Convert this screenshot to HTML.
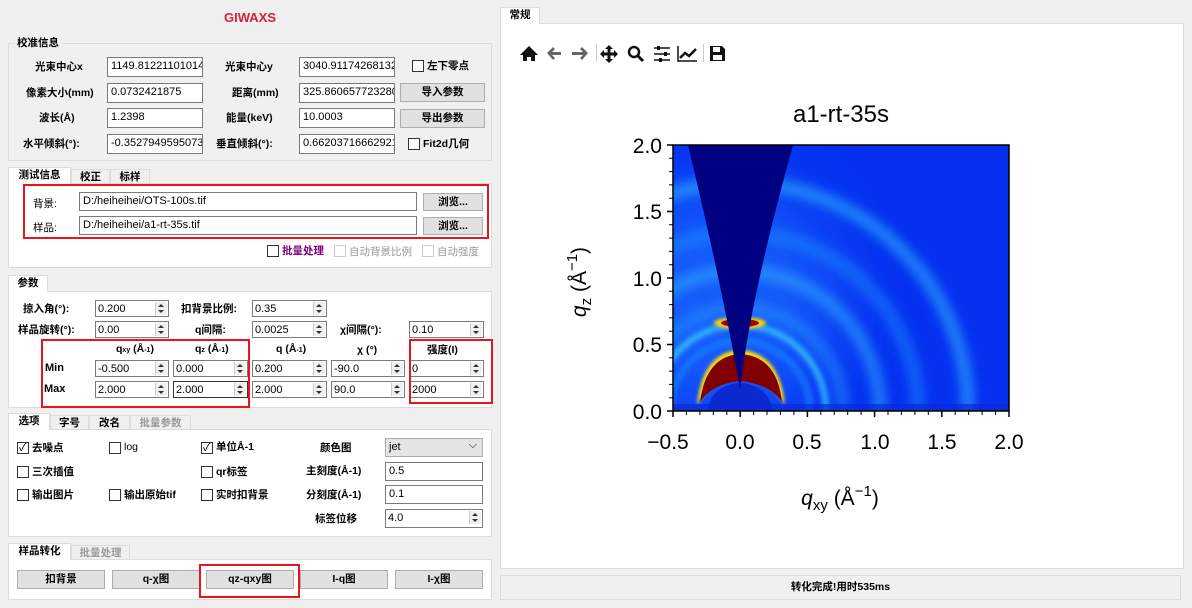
<!DOCTYPE html>
<html><head><meta charset="utf-8">
<style>
*{box-sizing:border-box;margin:0;padding:0}
body{width:1192px;height:608px;background:#f0f0f0;font-family:"Liberation Sans","Noto Sans CJK SC",sans-serif;font-size:11px;color:#000;position:relative;overflow:hidden}
.a{position:absolute}
.lb{position:absolute;font-weight:bold;font-size:10.5px;white-space:nowrap;line-height:13px}
.in{position:absolute;background:#fff;border:1px solid #7a7a7a;font-size:11px;padding:2px 0 0 3px;white-space:nowrap;overflow:hidden;height:20px}
.sp{position:absolute;background:#fff;border:1px solid #7a7a7a;height:17px;font-size:11px;padding:1px 0 0 2px;white-space:nowrap;line-height:14px}
.sp:after{content:"";position:absolute;right:1px;top:1px;width:11px;height:13px;border-left:1px solid #ccc;background:#f0f0f0}
.sp i{position:absolute;right:4px;top:3px;width:0;height:0;border:3px solid transparent;border-bottom:3px solid #333;border-top:0;z-index:2}
.sp b{position:absolute;right:4px;top:9px;width:0;height:0;border:3px solid transparent;border-top:3px solid #333;border-bottom:0;z-index:2}
.btn{position:absolute;background:#e1e1e1;border:1px solid #adadad;font-weight:bold;font-size:10.5px;text-align:center;line-height:17px}
.grp{position:absolute;border:1px solid #dcdcdc;background:#f0f0f0}
.panel{position:absolute;border:1px solid #dcdcdc;background:#fff}
.tab{position:absolute;border:1px solid #dcdcdc;border-bottom:none;background:#f0f0f0;font-weight:bold;font-size:10.5px;text-align:center;line-height:15px}
.tab.on{background:#fff;height:17px}
.cb{position:absolute;width:12px;height:12px;border:1px solid #333;background:#fff}
.cb.dis{border-color:#ccc}
.red{position:absolute;border:2px solid #e8141e;z-index:5}
small{font-size:7px}
</style></head><body>
<div class="a" style="left:0;top:10px;width:500px;text-align:center;color:#d81e3c;font-weight:bold;font-size:13px">GIWAXS</div>

<div class="grp" style="left:8px;top:43px;width:484px;height:118px"></div>
<div class="lb" style="left:15px;top:37px;background:#f0f0f0;padding:0 2px">校准信息</div>
<div class="lb" style="left:35px;top:61px">光束中心x</div>
<div class="in" style="left:107px;top:57px;width:96px">1149.812211010145</div>
<div class="lb" style="left:225px;top:61px">光束中心y</div>
<div class="in" style="left:299px;top:57px;width:96px">3040.911742681327</div>
<div class="cb" style="left:412px;top:60px"></div><div class="lb" style="left:427px;top:60px">左下零点</div>
<div class="lb" style="left:26px;top:87px">像素大小(mm)</div>
<div class="in" style="left:107px;top:83px;width:96px">0.0732421875</div>
<div class="lb" style="left:232px;top:87px">距离(mm)</div>
<div class="in" style="left:299px;top:83px;width:96px">325.8606577232806</div>
<div class="btn" style="left:400px;top:83px;width:85px;height:19px">导入参数</div>
<div class="lb" style="left:39px;top:112px">波长(Å)</div>
<div class="in" style="left:107px;top:108px;width:96px">1.2398</div>
<div class="lb" style="left:226px;top:112px">能量(keV)</div>
<div class="in" style="left:299px;top:108px;width:96px">10.0003</div>
<div class="btn" style="left:400px;top:109px;width:85px;height:19px">导出参数</div>
<div class="lb" style="left:23px;top:138px">水平倾斜(°):</div>
<div class="in" style="left:107px;top:134px;width:96px">-0.35279495950739</div>
<div class="lb" style="left:216px;top:138px">垂直倾斜(°):</div>
<div class="in" style="left:299px;top:134px;width:96px">0.662037166629210</div>
<div class="cb" style="left:408px;top:138px"></div><div class="lb" style="left:423px;top:138px">Fit2d几何</div>

<div class="panel" style="left:8px;top:183px;width:484px;height:85px"></div>
<div class="tab on" style="left:8px;top:167px;width:63px">测试信息</div>
<div class="tab" style="left:71px;top:169px;width:39px;height:14px">校正</div>
<div class="tab" style="left:110px;top:169px;width:40px;height:14px">标样</div>
<div class="red" style="left:23px;top:184px;width:466px;height:55px"></div>
<div class="a" style="left:33px;top:196px;font-size:10.5px">背景:</div>
<div class="in" style="left:79px;top:192px;width:338px;height:19px">D:/heiheihei/OTS-100s.tif</div>
<div class="btn" style="left:423px;top:193px;width:60px;height:18px">浏览...</div>
<div class="a" style="left:33px;top:220px;font-size:10.5px">样品:</div>
<div class="in" style="left:79px;top:216px;width:338px;height:19px">D:/heiheihei/a1-rt-35s.tif</div>
<div class="btn" style="left:423px;top:217px;width:60px;height:18px">浏览...</div>
<div class="cb" style="left:267px;top:245px"></div><div class="lb" style="left:282px;top:245px;color:#800080">批量处理</div>
<div class="cb dis" style="left:334px;top:245px"></div><div class="a" style="left:349px;top:244px;color:#999;font-size:10.5px">自动背景比例</div>
<div class="cb dis" style="left:422px;top:245px"></div><div class="a" style="left:437px;top:244px;color:#999;font-size:10.5px">自动强度</div>

<div class="panel" style="left:8px;top:291px;width:484px;height:117px"></div>
<div class="tab on" style="left:8px;top:275px;width:40px">参数</div>
<div class="lb" style="left:23px;top:303px">掠入角(°):</div>
<div class="sp" style="left:95px;top:300px;width:74px">0.200<i></i><b></b></div>
<div class="lb" style="left:181px;top:303px">扣背景比例:</div>
<div class="sp" style="left:252px;top:300px;width:75px">0.35<i></i><b></b></div>
<div class="lb" style="left:18px;top:324px">样品旋转(°):</div>
<div class="sp" style="left:95px;top:321px;width:74px">0.00<i></i><b></b></div>
<div class="lb" style="left:195px;top:324px">q间隔:</div>
<div class="sp" style="left:252px;top:321px;width:75px">0.0025<i></i><b></b></div>
<div class="lb" style="left:340px;top:324px">χ间隔(°):</div>
<div class="sp" style="left:409px;top:321px;width:75px">0.10<i></i><b></b></div>
<div class="lb" style="left:116px;top:343px">q<small>xy</small> (Å<small>-1</small>)</div>
<div class="lb" style="left:195px;top:343px">q<small>z</small> (Å<small>-1</small>)</div>
<div class="lb" style="left:276px;top:343px">q (Å<small>-1</small>)</div>
<div class="lb" style="left:357px;top:344px">χ (°)</div>
<div class="lb" style="left:427px;top:344px">强度(I)</div>
<div class="lb" style="left:45px;top:362px;font-size:11px">Min</div>
<div class="lb" style="left:44px;top:383px;font-size:11px">Max</div>
<div class="sp" style="left:95px;top:360px;width:74px">-0.500<i></i><b></b></div>
<div class="sp" style="left:173px;top:360px;width:75px">0.000<i></i><b></b></div>
<div class="sp" style="left:252px;top:360px;width:75px">0.200<i></i><b></b></div>
<div class="sp" style="left:331px;top:360px;width:74px">-90.0<i></i><b></b></div>
<div class="sp" style="left:409px;top:360px;width:75px">0<i></i><b></b></div>
<div class="sp" style="left:95px;top:381px;width:74px">2.000<i></i><b></b></div>
<div class="sp" style="left:173px;top:381px;width:75px;border-color:#333">2.000<i></i><b></b></div>
<div class="sp" style="left:252px;top:381px;width:75px">2.000<i></i><b></b></div>
<div class="sp" style="left:331px;top:381px;width:74px">90.0<i></i><b></b></div>
<div class="sp" style="left:409px;top:381px;width:75px">2000<i></i><b></b></div>
<div class="red" style="left:41px;top:339px;width:209px;height:69px"></div>
<div class="red" style="left:409px;top:339px;width:84px;height:65px"></div>

<div class="panel" style="left:8px;top:429px;width:484px;height:108px"></div>
<div class="tab on" style="left:8px;top:413px;width:42px">选项</div>
<div class="tab" style="left:50px;top:415px;width:39px;height:14px">字号</div>
<div class="tab" style="left:89px;top:415px;width:41px;height:14px">改名</div>
<div class="tab" style="left:130px;top:415px;width:61px;height:14px;color:#999">批量参数</div>
<div class="cb" style="left:17px;top:442px"></div><div class="a" style="left:19px;top:439px;font-size:11px">✓</div><div class="lb" style="left:32px;top:442px">去噪点</div>
<div class="cb" style="left:109px;top:442px"></div><div class="lb" style="left:124px;top:441px;font-weight:normal">log</div>
<div class="cb" style="left:201px;top:442px"></div><div class="a" style="left:203px;top:439px;font-size:11px">✓</div><div class="lb" style="left:216px;top:441px">单位Å-1</div>
<div class="lb" style="left:320px;top:442px">颜色图</div>
<div class="in" style="left:385px;top:438px;width:98px;height:19px;background:#e5e5e5;border-color:#adadad">jet<span style="position:absolute;right:5px;top:0">⌵</span></div>
<div class="cb" style="left:17px;top:466px"></div><div class="lb" style="left:32px;top:466px">三次插值</div>
<div class="cb" style="left:201px;top:466px"></div><div class="lb" style="left:216px;top:466px">qr标签</div>
<div class="lb" style="left:306px;top:465px">主刻度(Å-1)</div>
<div class="in" style="left:385px;top:462px;width:98px;height:19px">0.5</div>
<div class="cb" style="left:17px;top:489px"></div><div class="lb" style="left:32px;top:489px">输出图片</div>
<div class="cb" style="left:109px;top:489px"></div><div class="lb" style="left:124px;top:489px">输出原始tif</div>
<div class="cb" style="left:201px;top:489px"></div><div class="lb" style="left:216px;top:489px">实时扣背景</div>
<div class="lb" style="left:306px;top:489px">分刻度(Å-1)</div>
<div class="in" style="left:385px;top:485px;width:98px;height:19px">0.1</div>
<div class="lb" style="left:315px;top:513px">标签位移</div>
<div class="sp" style="left:385px;top:509px;width:98px;height:19px">4.0<i></i><b></b></div>

<div class="panel" style="left:8px;top:559px;width:484px;height:41px"></div>
<div class="tab on" style="left:8px;top:543px;width:63px">样品转化</div>
<div class="tab" style="left:71px;top:545px;width:59px;height:14px;color:#999">批量处理</div>
<div class="btn" style="left:17px;top:570px;width:88px;height:19px">扣背景</div>
<div class="btn" style="left:112px;top:570px;width:88px;height:19px">q-χ图</div>
<div class="btn" style="left:206px;top:570px;width:88px;height:19px">qz-qxy图</div>
<div class="btn" style="left:300px;top:570px;width:88px;height:19px">I-q图</div>
<div class="btn" style="left:395px;top:570px;width:88px;height:19px">I-χ图</div>
<div class="red" style="left:199px;top:564px;width:101px;height:34px"></div>

<!-- right -->
<div class="panel" style="left:500px;top:23px;width:684px;height:546px"></div>
<div class="tab on" style="left:500px;top:7px;width:40px">常规</div>
<div class="a" style="left:500px;top:575px;width:681px;height:25px;border:1px solid #dcdcdc;text-align:center;font-weight:bold;font-size:10.5px;line-height:23px">转化完成!用时535ms</div>

<svg class="a" style="left:0;top:0" width="1192" height="608">
<defs>
<filter id="bl" x="-30%" y="-30%" width="160%" height="160%"><feGaussianBlur stdDeviation="6"/></filter>
<filter id="bl3" x="-30%" y="-30%" width="160%" height="160%"><feGaussianBlur stdDeviation="3"/></filter>
<filter id="bl2"><feGaussianBlur stdDeviation="1.5"/></filter>
<filter id="bg" x="-50%" y="-50%" width="200%" height="200%"><feGaussianBlur stdDeviation="40"/></filter>
<clipPath id="cp"><rect x="673" y="145" width="336" height="266"/></clipPath>
</defs>
<g fill="#111">
<path d="M520 55 L529 46 L538 55 L535 55 L535 61 L531 61 L531 57 L527 57 L527 61 L523 61 L523 55Z"/>
<path d="M547 53 L553 47 L555 49 L552 52 L561 52 L561 55 L552 55 L555 58 L553 60Z" fill="#666"/>
<path d="M588 53 L582 47 L580 49 L583 52 L572 52 L572 55 L583 55 L580 58 L582 60Z" fill="#666"/>
<rect x="596" y="44" width="1" height="18" fill="#ccc"/>
<path d="M609 45 L613 49 L610.5 49 L610.5 52.5 L614 52.5 L614 50 L618 54 L614 58 L614 55.5 L610.5 55.5 L610.5 59 L613 59 L609 63 L605 59 L607.5 59 L607.5 55.5 L604 55.5 L604 58 L600 54 L604 50 L604 52.5 L607.5 52.5 L607.5 49 L605 49Z"/>
<circle cx="634" cy="52" r="5" fill="none" stroke="#111" stroke-width="2.5"/><path d="M637 55 L643 61" stroke="#111" stroke-width="3"/>
<path d="M654 48h16M654 54h16M654 60h16" stroke="#111" stroke-width="1.5"/><rect x="657" y="46" width="3" height="4"/><rect x="664" y="52" width="3" height="4"/><rect x="659" y="58" width="3" height="4"/>
<path d="M678 46 V61 H697" fill="none" stroke="#111" stroke-width="1.5"/><path d="M680 58 L685 53 L689 56 L696 49" fill="none" stroke="#111" stroke-width="2.5"/>
<rect x="703" y="44" width="1" height="18" fill="#ccc"/>
<path d="M710 46 H722 L725 49 V61 H710Z M713 47 V52 H720 V47Z M713 55 V60 H722 V55Z" fill-rule="evenodd"/>
</g>
<text x="841" y="122" text-anchor="middle" font-size="24" font-family="Liberation Sans">a1-rt-35s</text>
<g clip-path="url(#cp)">
<rect x="673" y="145" width="336" height="266" fill="#0530f0"/>
<circle cx="720" cy="300" r="120" fill="#1a70ff" opacity="0.7" filter="url(#bg)"/>
<g fill="none" filter="url(#bl)">
<circle cx="740" cy="411" r="228" stroke="#30c0ff" stroke-width="10" opacity="0.75"/>
<circle cx="740" cy="411" r="178" stroke="#2090ff" stroke-width="12" opacity="0.6"/>
<circle cx="740" cy="411" r="140" stroke="#30b0ff" stroke-width="10" opacity="0.75"/>
<circle cx="740" cy="411" r="103" stroke="#2aa0ff" stroke-width="8" opacity="0.7"/>
</g>
<g fill="none" filter="url(#bl3)">
<circle cx="740" cy="411" r="86" stroke="#40d8ff" stroke-width="5" opacity="0.9"/>
<circle cx="740" cy="411" r="70" stroke="#1a80ff" stroke-width="6" opacity="0.8"/>
</g>
<ellipse cx="740" cy="323" rx="26" ry="6" fill="#ffd000" filter="url(#bl2)"/>
<ellipse cx="740" cy="323" rx="19" ry="4" fill="#a00000"/>
<path d="M697 406 Q702 352 740 350 Q780 352 785 406 Q772 380 740 377 Q710 380 697 406Z" fill="#ffe000" filter="url(#bl2)"/>
<path d="M700 402 Q706 356 740 354 Q777 356 782 402 Q770 384 740 381 Q712 384 700 402Z" fill="#800000"/>
<path d="M708 411 A32 28 0 0 1 772 411Z" fill="#0a2ad0"/>
<rect x="673" y="404" width="336" height="7" fill="#0a2ad0" opacity="0.7"/>
<path d="M688 145 Q725 300 740 390 Q750 300 793 145Z" fill="#000080"/>
</g>
<g stroke="#000" fill="none">
<rect x="673" y="145" width="336" height="266" stroke-width="1.5"/>
<path d="M673 145h-6M673 211.5h-6M673 278h-6M673 344.5h-6M673 411h-6" stroke-width="1.5"/>
<path d="M673 158.3h-4M673 171.6h-4M673 184.9h-4M673 198.2h-4M673 224.8h-4M673 238.1h-4M673 251.4h-4M673 264.7h-4M673 291.3h-4M673 304.6h-4M673 317.9h-4M673 331.2h-4M673 357.8h-4M673 371.1h-4M673 384.4h-4M673 397.7h-4"/>
<path d="M673 411v6M740.2 411v6M807.4 411v6M874.6 411v6M941.8 411v6M1009 411v6" stroke-width="1.5"/>
<path d="M686.4 411v4M699.9 411v4M713.3 411v4M726.8 411v4M753.6 411v4M767 411v4M780.5 411v4M793.9 411v4M820.8 411v4M834.2 411v4M847.7 411v4M861.1 411v4M888 411v4M901.4 411v4M914.9 411v4M928.3 411v4M955.2 411v4M968.6 411v4M982.1 411v4M995.5 411v4"/>
</g>
<g font-family="Liberation Sans" font-size="21" text-anchor="end">
<text x="662" y="153">2.0</text><text x="662" y="219">1.5</text><text x="662" y="286">1.0</text><text x="662" y="352">0.5</text><text x="662" y="419">0.0</text>
</g>
<g font-family="Liberation Sans" font-size="21" text-anchor="middle">
<text x="668" y="449">−0.5</text><text x="740" y="449">0.0</text><text x="807" y="449">0.5</text><text x="875" y="449">1.0</text><text x="942" y="449">1.5</text><text x="1009" y="449">2.0</text>
<text x="840" y="505"><tspan font-style="italic">q</tspan><tspan font-size="15" dy="5">xy</tspan><tspan dy="-5"> (Å</tspan><tspan font-size="15" dy="-9">−1</tspan><tspan dy="9">)</tspan></text>
</g>
<text transform="translate(586,282) rotate(-90)" font-family="Liberation Sans" font-size="21" text-anchor="middle"><tspan font-style="italic">q</tspan><tspan font-size="15" dy="5">z</tspan><tspan dy="-5"> (Å</tspan><tspan font-size="15" dy="-9">−1</tspan><tspan dy="9">)</tspan></text>
</svg>
</body></html>
